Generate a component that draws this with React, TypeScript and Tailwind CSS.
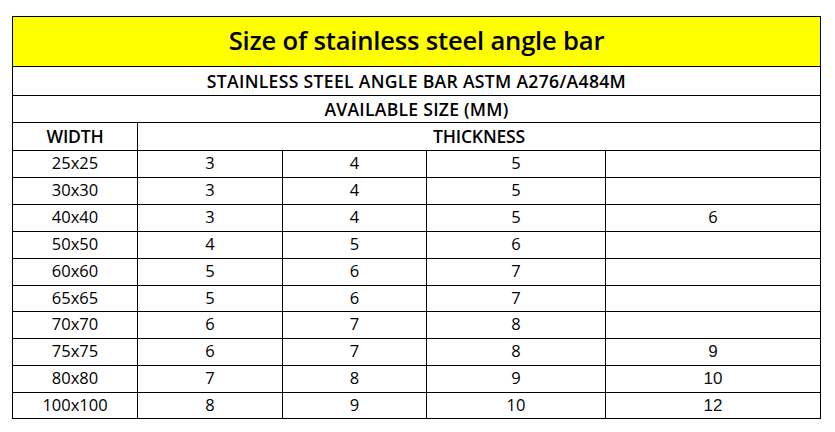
const rows: [string, string, string, string, string][] = [
  ['25x25', '3', '4', '5', ''],
  ['30x30', '3', '4', '5', ''],
  ['40x40', '3', '4', '5', '6'],
  ['50x50', '4', '5', '6', ''],
  ['60x60', '5', '6', '7', ''],
  ['65x65', '5', '6', '7', ''],
  ['70x70', '6', '7', '8', ''],
  ['75x75', '6', '7', '8', '9'],
  ['80x80', '7', '8', '9', '10'],
  ['100x100', '8', '9', '10', '12'],
]

const rowHeights = [27, 27, 27, 27, 27, 26, 27, 27, 27, 26]

const seg = "font-['Open_Sans','Noto_Sans',sans-serif]"
const cell = 'border border-black p-0 text-center'

export default function App() {
  return (
    <div className="w-[835px] h-[432px] bg-white pl-[12px] pt-[16px]">
      <table className={`table-fixed border-collapse w-[808px] text-black ${seg}`}>
        <colgroup>
          <col className="w-[125px]" />
          <col className="w-[145px]" />
          <col className="w-[144px]" />
          <col className="w-[179px]" />
          <col className="w-[215px]" />
        </colgroup>
        <tbody>
          <tr className="h-[50px]">
            <td colSpan={5} className={`${cell} bg-[#ffff00] text-[25.6px] font-semibold tracking-[-0.2px]`}>
              Size of stainless steel angle bar
            </td>
          </tr>
          <tr className="h-[29px]">
            <td colSpan={5} className={`${cell} text-[17.6px] font-semibold tracking-[0.3px]`}>
              STAINLESS STEEL ANGLE BAR ASTM A276/A484M
            </td>
          </tr>
          <tr className="h-[27px]">
            <td colSpan={5} className={`${cell} text-[17.6px] font-semibold tracking-[0.25px]`}>
              AVAILABLE SIZE (MM)
            </td>
          </tr>
          <tr className="h-[26px]">
            <td className={`${cell} text-[17.6px] font-semibold tracking-[-0.2px]`}>WIDTH</td>
            <td colSpan={4} className={`${cell} text-[17.6px] font-semibold tracking-[-0.2px]`}>THICKNESS</td>
          </tr>
          {rows.map((r, i) => (
            <tr key={r[0]} style={{ height: rowHeights[i] }}>
              <td className={`${cell} text-[16.5px]`}>{r[0]}</td>
              <td className={`${cell} text-[16.5px]`}>{r[1]}</td>
              <td className={`${cell} text-[16.5px]`}>{r[2]}</td>
              <td className={`${cell} text-[16.5px]`}>{r[3]}</td>
              {i < 7 ? (
                <td className={`${cell} text-[16.5px]`}>{r[4]}</td>
              ) : (
                <td className={`${cell} text-[17px] text-[#111] font-['Liberation_Sans',Arial,sans-serif]`}>{r[4]}</td>
              )}
            </tr>
          ))}
        </tbody>
      </table>
    </div>
  )
}
